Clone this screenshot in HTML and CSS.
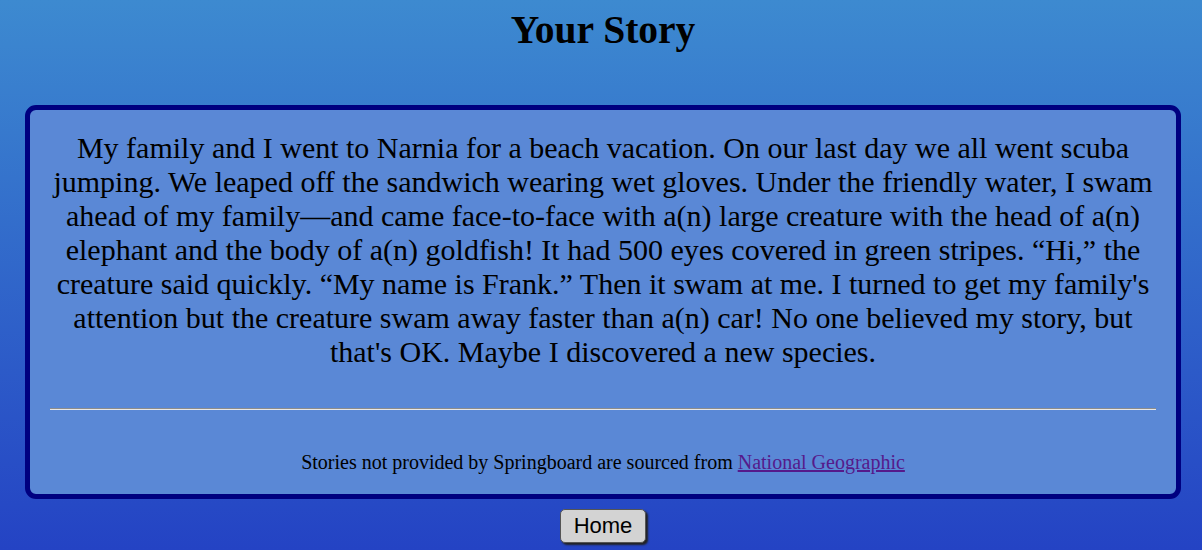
FILE: index.html
```html
<!DOCTYPE html>
<html>
<head>
<meta charset="utf-8">
<link rel="stylesheet" href="styles.css">
</head>
<body>
<h1 class="title">Your Story</h1>
<div class="story-box">
  <p class="story">My family and I went to Narnia for a beach vacation. On our last day we all went scuba jumping. We leaped off the sandwich wearing wet gloves. Under the friendly water, I swam ahead of my family—and came face-to-face with a(n) large creature with the head of a(n) elephant and the body of a(n) goldfish! It had 500 eyes covered in green stripes. “Hi,” the creature said quickly. “My name is Frank.” Then it swam at me. I turned to get my family's attention but the creature swam away faster than a(n) car! No one believed my story, but that's OK. Maybe I discovered a new species.</p>
  <hr class="divider">
  <p class="source">Stories not provided by Springboard are sourced from <a class="source-link" href="#">National Geographic</a></p>
</div>
<div class="actions">
  <button class="home-btn">Home</button>
</div>
</body>
</html>
```

FILE: styles.css
```css
html {
  height: 100%;
}
body {
  margin: 0;
  padding-left: 4px;
  min-height: 100%;
  background: linear-gradient(to bottom, #3d8ad0 0%, #2443c4 100%);
  font-family: "Liberation Serif", "Times New Roman", serif;
  color: #000;
}
.title {
  margin: 8px 0 0;
  text-align: center;
  font-size: 39.5px;
  font-weight: bold;
  line-height: 44px;
}
.story-box {
  margin: 53px 21px 0 21px;
  border: 5px solid #000080;
  border-radius: 11px;
  background: #5a88d6;
  padding: 21px 20px 20px;
}
.story {
  margin: 0;
  font-size: 30px;
  text-align: center;
  line-height: 34px;
}
.divider {
  margin: 39px 0 0;
  border: none;
  border-top: 1px solid #8c8c8c;
  border-bottom: 1px solid #e8e8e8;
  height: 0;
}
.source {
  margin: 41px 0 0;
  font-size: 20px;
  line-height: 23px;
  text-align: center;
}
.source-link {
  color: #551a8b;
}
.actions {
  display: flex;
  justify-content: center;
  margin-top: 10px;
}
.home-btn {
  font-family: "Liberation Sans", Arial, sans-serif;
  font-size: 22px;
  color: #000;
  background: #d3d3d3;
  border: 1px solid #555;
  border-radius: 5px;
  padding: 3px 13px 3px;
  box-shadow: 2px 2px 2px #222;
  line-height: normal;
}
```
